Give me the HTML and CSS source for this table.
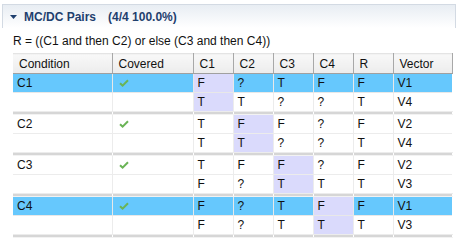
FILE: index.html
```html
<!DOCTYPE html>
<html>
<head>
<meta charset="utf-8">
<link rel="stylesheet" href="styles.css">
</head>
<body>
<div class="section">
  <div class="sec-head">
    <svg class="twisty" width="7" height="4" viewBox="0 0 7 4"><path d="M0 0H7L3.5 4Z" fill="#1f3f6e"/></svg>
    <span class="sec-title">MC/DC Pairs</span>
    <span class="sec-stat">(4/4 100.0%)</span>
  </div>
  <div class="formula">R = ((C1 and then C2) or else (C3 and then C4))</div>
  <table class="grid">
    <colgroup>
      <col class="w-cond"><col class="w-cov"><col class="w-c"><col class="w-c"><col class="w-c"><col class="w-c"><col class="w-c"><col class="w-vec">
    </colgroup>
    <thead>
      <tr><th>Condition</th><th>Covered</th><th>C1</th><th>C2</th><th>C3</th><th>C4</th><th>R</th><th>Vector</th></tr>
    </thead>
    <tbody>
      <tr class="sel"><td>C1</td><td><svg class="check" width="10" height="8" viewBox="0 0 10 8"><path d="M1 4.2L3.6 6.6L9 1.2" fill="none" stroke="#6ab456" stroke-width="2"/></svg></td><td class="hl">F</td><td>?</td><td>T</td><td>F</td><td>F</td><td>V1</td></tr>
      <tr><td></td><td></td><td class="hl">T</td><td>T</td><td>?</td><td>?</td><td>T</td><td>V4</td></tr>
      <tr class="sep"><td></td><td></td><td></td><td></td><td></td><td></td><td></td><td></td></tr>
      <tr><td>C2</td><td><svg class="check" width="10" height="8" viewBox="0 0 10 8"><path d="M1 4.2L3.6 6.6L9 1.2" fill="none" stroke="#6ab456" stroke-width="2"/></svg></td><td>T</td><td class="hl">F</td><td>F</td><td>?</td><td>F</td><td>V2</td></tr>
      <tr><td></td><td></td><td>T</td><td class="hl">T</td><td>?</td><td>?</td><td>T</td><td>V4</td></tr>
      <tr class="sep"><td></td><td></td><td></td><td></td><td></td><td></td><td></td><td></td></tr>
      <tr><td>C3</td><td><svg class="check" width="10" height="8" viewBox="0 0 10 8"><path d="M1 4.2L3.6 6.6L9 1.2" fill="none" stroke="#6ab456" stroke-width="2"/></svg></td><td>T</td><td>F</td><td class="hl">F</td><td>?</td><td>F</td><td>V2</td></tr>
      <tr><td></td><td></td><td>F</td><td>?</td><td class="hl">T</td><td>T</td><td>T</td><td>V3</td></tr>
      <tr class="sep"><td></td><td></td><td></td><td></td><td></td><td></td><td></td><td></td></tr>
      <tr class="sel"><td>C4</td><td><svg class="check" width="10" height="8" viewBox="0 0 10 8"><path d="M1 4.2L3.6 6.6L9 1.2" fill="none" stroke="#6ab456" stroke-width="2"/></svg></td><td>F</td><td>?</td><td>T</td><td class="hl">F</td><td>F</td><td>V1</td></tr>
      <tr><td></td><td></td><td>F</td><td>?</td><td>T</td><td class="hl">T</td><td>T</td><td>V3</td></tr>
      <tr class="sep"><td></td><td></td><td></td><td></td><td></td><td></td><td></td><td></td></tr>
    </tbody>
  </table>
</div>
</body>
</html>
```
FILE: styles.css
```css
html, body {
  margin: 0;
  padding: 0;
  background: #ffffff;
  overflow: hidden;
}
body {
  font-family: "Liberation Sans", Arial, sans-serif;
  font-size: 12px;
  color: #111;
}
.section {
  width: 457px;
  height: 240px;
  padding-top: 4px;
  box-sizing: border-box;
}
.sec-head {
  margin-left: 2px;
  margin-right: 1px;
  height: 23px;
  border: 1px solid #d3dae3;
  border-bottom: none;
  background: linear-gradient(#e8edf3, #ffffff);
  display: flex;
  align-items: center;
  padding-left: 7px;
  color: #1f3f6e;
  font-weight: bold;
  font-size: 12px;
}
.twisty {
  margin-right: 7px;
  margin-top: 1px;
}
.sec-stat {
  margin-left: 12px;
}
.formula {
  padding-left: 13px;
  height: 25px;
  line-height: 26px;
}
.grid {
  margin-left: 13px;
  border-collapse: collapse;
  table-layout: fixed;
  width: 439px;
}
.w-cond { width: 99px; }
.w-cov { width: 81px; }
.w-c { width: 40px; }
.w-vec { width: 59px; }
.grid thead tr { height: 20px; }
.grid th {
  padding: 0 0 0 6px;
  text-align: left;
  font-weight: normal;
  background: linear-gradient(#f8f8f8, #ececec);
  border-right: 1px solid #a8a8a8;
  border-bottom: 1px solid #a0a0a0;
  border-top: 1px solid #e4e4e4;
  white-space: nowrap;
}
.grid tbody tr { height: 19px; }
.grid td {
  padding: 0 0 0 4px;
  border-right: 1px solid #ececec;
  border-bottom: 1px solid #ececec;
  white-space: nowrap;
}
.grid td:last-child { border-right: none; }
.grid tr.sel td { background: #66c8fd; border-color: #e8e8e8; }
.grid td.hl { background: #dadafc; }
.grid tr.sel td.hl { background: #dadafc; }
.grid tbody tr.sep { height: 3px; }
.grid tr.sep td {
  padding: 0;
  background: #d6d6d6;
  border-bottom: 1px solid #f2f2f2;
  border-right: 1px solid #ffffff;
}
.check { display: block; margin-left: 2px; }
```
